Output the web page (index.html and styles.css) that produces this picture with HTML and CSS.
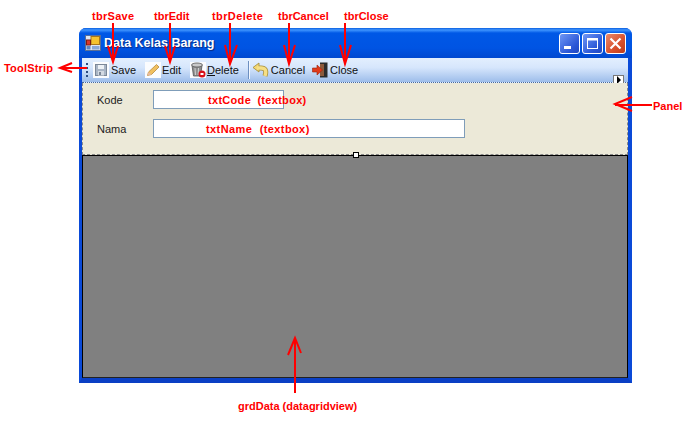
FILE: index.html
```html
<!DOCTYPE html>
<html lang="id">
<head>
  <meta charset="UTF-8" />
  <title>Data Kelas Barang</title>
  <link rel="stylesheet" href="styles.css">
</head>
<body>
  <div class="window">
    <div class="titlebar">
      <svg class="app-icon" width="16" height="16" viewBox="0 0 16 16">
        <rect x="0.5" y="0.5" width="15" height="15" fill="#dfe6f2" stroke="#5a6f96"/>
        <rect x="6" y="1.5" width="8.5" height="8" fill="#f6c22e" stroke="#a8761a"/>
        <rect x="1.5" y="5" width="4" height="5" fill="#d8382c" stroke="#7c1a14"/>
        <rect x="1.5" y="11" width="4" height="3.5" fill="#5c86c8"/>
        <rect x="7" y="11" width="7.5" height="3.5" fill="#8aa8d8"/>
      </svg>
      <span class="title">Data Kelas Barang</span>
      <div class="caption-btns">
        <div class="caption-btn">
          <svg width="19" height="19" viewBox="0 0 19 19"><rect x="4" y="12" width="7" height="3" fill="#fff"/></svg>
        </div>
        <div class="caption-btn">
          <svg width="19" height="19" viewBox="0 0 19 19"><rect x="4.5" y="4.5" width="10" height="10" fill="none" stroke="#fff"/><rect x="4" y="4" width="11" height="2.5" fill="#fff"/></svg>
        </div>
        <div class="caption-btn close-btn">
          <svg width="19" height="19" viewBox="0 0 19 19"><path d="M4.5 4.5 14.5 14.5M14.5 4.5 4.5 14.5" stroke="#fff" stroke-width="2.2"/></svg>
        </div>
      </div>
    </div>

    <div class="toolbar">
      <div class="grip"><i></i><i></i><i></i><i></i></div>
      <div class="tool tool-save">
        <span class="tool-icon">
          <svg width="14" height="14" viewBox="0 0 14 14">
            <rect x="1.5" y="1.5" width="11" height="11" fill="#aab6c6" stroke="#7c8898"/>
            <rect x="4" y="2" width="6" height="4" fill="#eef2f6"/>
            <rect x="4" y="8" width="6" height="4.5" fill="#d4dae2"/>
            <rect x="5" y="9" width="2" height="3" fill="#7c8898"/>
          </svg>
        </span>
        <span>Save</span>
      </div>
      <div class="tool tool-edit">
        <span class="tool-icon">
          <svg width="14" height="14" viewBox="0 0 14 14">
            <path d="M1.5 12.5 2.5 9 10.5 1.5 13 4 5.5 11.5Z" fill="#f0c060" stroke="#b98a3a" stroke-width="0.8"/>
            <path d="M1.5 12.5 2.5 9 5.5 11.5Z" fill="#e9b9a0"/>
          </svg>
        </span>
        <span>Edit</span>
      </div>
      <div class="tool tool-delete">
        <span class="tool-icon">
          <svg width="16" height="16" viewBox="0 0 16 16">
            <path d="M2 3.5 3.5 14H10.5L12 3.5Z" fill="#8d8d8d" stroke="#555" stroke-width="0.8"/>
            <ellipse cx="7" cy="3" rx="5.5" ry="2" fill="#c9c9c9" stroke="#555" stroke-width="0.8"/>
            <path d="M5 6 5.5 13M8.5 6 8.2 13" stroke="#d0d0d0"/>
            <circle cx="12" cy="12" r="3.5" fill="#d8101a"/>
            <rect x="10.5" y="11" width="3" height="2" fill="#fff"/>
          </svg>
        </span>
        <span><u>D</u>elete</span>
      </div>
      <div class="tool-sep"></div>
      <div class="tool tool-cancel">
        <svg class="cancel-icon" width="18" height="18" viewBox="0 0 18 18">
          <path d="M5 7H9C13 7 15 9 13 15" fill="none" stroke="#a8913f" stroke-width="5"/>
          <path d="M1 6.5 7 2V11Z" fill="#f3d873" stroke="#a8913f" stroke-width="0.9"/>
          <path d="M5 7H9C13 7 15 9 13 15" fill="none" stroke="#f6df85" stroke-width="3.4"/>
        </svg>
        <span>Cancel</span>
      </div>
      <div class="tool tool-close">
        <svg class="close-icon" width="16" height="16" viewBox="0 0 16 16">
          <rect x="8" y="0.5" width="7.5" height="15" fill="#2c2c2c"/>
          <rect x="8" y="2" width="4" height="12" fill="#8b5a3c"/>
          <path d="M0.5 6H5V3L10.5 8 5 13V10H0.5Z" fill="#e03a1c" stroke="#9c2208" stroke-width="0.6"/>
        </svg>
        <span>Close</span>
      </div>
      <div class="overflow-btn"></div>
    </div>

    <div class="panel">
      <div class="field">
        <label class="field-label">Kode</label>
        <div class="textbox textbox-code"></div>
      </div>
      <div class="field">
        <label class="field-label">Nama</label>
        <div class="textbox textbox-name"></div>
      </div>
      <div class="handle"></div>
    </div>

    <div class="grid"></div>
  </div>

  <svg class="arrows" width="695" height="423" viewBox="0 0 695 423">
    <g fill="none" stroke="#f00" stroke-width="2">
      <path d="M113 23V62M108 46 113 62 118 46"/>
      <path d="M170 23V62M165 46 170 62 175 46"/>
      <path d="M230 23V64M225 45 230 64 237 45"/>
      <path d="M289 23V64M284 45 289 64 295 45"/>
      <path d="M345 23V64M340 45 345 64 351 45"/>
      <path d="M87 68H60M72 63 60 68 72 72"/>
      <path d="M652 105H615M632 97 615 104 632 111"/>
      <path d="M295 393V338M288 355 295 338 301 353"/>
    </g>
  </svg>

  <span class="note note-save">tbrSave</span>
  <span class="note note-edit">tbrEdit</span>
  <span class="note note-delete">tbrDelete</span>
  <span class="note note-cancel">tbrCancel</span>
  <span class="note note-close">tbrClose</span>
  <span class="note note-strip">ToolStrip</span>
  <span class="note note-panel">Panel</span>
  <span class="note note-code">txtCode (textbox)</span>
  <span class="note note-name">txtName (textbox)</span>
  <span class="note note-grid">grdData (datagridview)</span>
</body>
</html>
```

FILE: styles.css
```css
body {
  margin: 0;
  width: 695px;
  height: 423px;
  position: relative;
  overflow: hidden;
  background: #fff;
  font-family: "Liberation Sans", Arial, sans-serif;
}

.window {
  position: absolute;
  left: 79px;
  top: 28px;
  width: 553px;
  height: 355px;
  box-sizing: border-box;
  display: flex;
  flex-direction: column;
  background: #0a4ad8;
  border-radius: 7px 7px 0 0;
  border-left: 3px solid #0a4ad8;
  border-right: 4px solid #0a4ad8;
  border-bottom: 5px solid #0a3fc4;
  box-shadow: inset 0 -1px 0 #00138c;
}

.titlebar {
  height: 30px;
  flex: none;
  display: flex;
  align-items: center;
  margin: 0 -4px 0 -3px;
  padding: 0 6px 0 6px;
  border-radius: 7px 7px 0 0;
  background: linear-gradient(to bottom, #0a5fe0 0, #3f95ff 2px, #0058e6 5px, #0054e3 20px, #0048d0 30px);
}

.app-icon {
  flex: none;
}

.title {
  margin-left: 3px;
  flex-grow: 1;
  color: #fff;
  font-size: 12.5px;
  font-weight: bold;
  text-shadow: 1px 1px 1px #0a2a80;
}

.caption-btns {
  display: flex;
  gap: 2px;
}

.caption-btn {
  width: 21px;
  height: 21px;
  box-sizing: border-box;
  border: 1px solid #fff;
  border-radius: 3px;
  background: linear-gradient(135deg, #6f97f5, #2a56d6 70%, #2048c0);
}

.caption-btn svg {
  display: block;
}

.close-btn {
  background: linear-gradient(135deg, #eb8a6c, #d8502c 60%, #bc3a18);
}

.toolbar {
  height: 25px;
  flex: none;
  position: relative;
  display: flex;
  align-items: center;
  box-sizing: border-box;
  padding-left: 4px;
  font-size: 11px;
  color: #111;
  background: linear-gradient(to bottom, #e3effe, #d6e6fc 40%, #9dbdea);
  border-bottom: 1px dotted #4a6a9c;
}

.grip {
  width: 2px;
  display: flex;
  flex-direction: column;
  gap: 2px;
}

.grip i {
  display: block;
  width: 2px;
  height: 2px;
  background: #2a4a80;
}

.tool {
  display: flex;
  align-items: center;
}

.tool-icon {
  width: 16px;
  height: 16px;
  display: flex;
  align-items: center;
  justify-content: center;
  margin-right: 1px;
  background: #fbfcfe;
}

.tool-save .tool-icon {
  margin-right: 2px;
}

.cancel-icon {
  margin-right: 1px;
}

.close-icon {
  margin-right: 2px;
}

.tool-save { margin-left: 5px; }
.tool-edit { margin-left: 9px; }
.tool-delete { margin-left: 9px; }
.tool-cancel { margin-left: 2px; }
.tool-close { margin-left: 7px; }

.tool-sep {
  width: 1px;
  height: 18px;
  margin-left: 9px;
  background: #6d8fc0;
  border-right: 1px solid #f2f7ff;
}

.overflow-btn {
  position: absolute;
  right: 4px;
  bottom: -3px;
  width: 9px;
  height: 8px;
  background: #fff;
  border: 1px solid #777;
}

.overflow-btn::after {
  content: "";
  position: absolute;
  left: 3px;
  top: 0;
  border-left: 4px solid #000;
  border-top: 4px solid transparent;
  border-bottom: 4px solid transparent;
}

.panel {
  height: 72px;
  flex: none;
  position: relative;
  box-sizing: border-box;
  display: flex;
  flex-direction: column;
  gap: 10px;
  padding: 7px 0 0 14px;
  background: #ece9d8;
  font-size: 11px;
  color: #222;
  border: 1px dashed #888;
  border-top: 0;
}

.field {
  display: flex;
  align-items: center;
}

.field-label {
  width: 56px;
}

.textbox {
  height: 19px;
  box-sizing: border-box;
  background: #fff;
  border: 1px solid #7f9db9;
}

.textbox-code { width: 131px; }
.textbox-name { width: 312px; }

.handle {
  position: absolute;
  left: 270px;
  bottom: -4px;
  width: 4px;
  height: 4px;
  background: #fff;
  border: 1px solid #000;
  z-index: 2;
}

.grid {
  flex-grow: 1;
  background: #808080;
  border: 1px solid #000;
  border-bottom-color: #222;
}

.arrows {
  position: absolute;
  left: 0;
  top: 0;
}

.note {
  position: absolute;
  color: #f00;
  font-family: "Liberation Sans", Arial, sans-serif;
  font-size: 11px;
  line-height: 13px;
  font-weight: bold;
  white-space: nowrap;
}

.note-save { left: 92px; top: 10px; letter-spacing: 0.3px; }
.note-edit { left: 154px; top: 10px; }
.note-delete { left: 212px; top: 10px; letter-spacing: 0.4px; }
.note-cancel { left: 278px; top: 10px; }
.note-close { left: 344px; top: 10px; }
.note-strip { left: 4px; top: 62px; letter-spacing: 0.2px; }
.note-panel { left: 653px; top: 100px; }
.note-code { left: 208px; top: 94px; letter-spacing: 0.3px; word-spacing: 3px; }
.note-name { left: 206px; top: 123px; letter-spacing: 0.4px; word-spacing: 4px; }
.note-grid { left: 238px; top: 400px; }
```
